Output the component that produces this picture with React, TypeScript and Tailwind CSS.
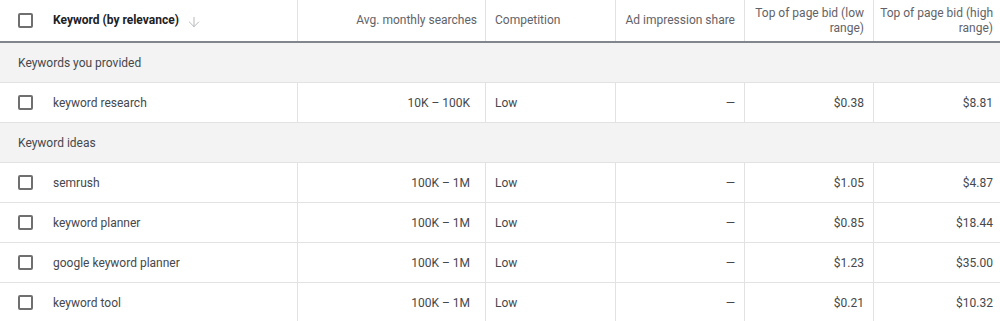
import React from 'react';
import { ArrowDown } from 'lucide-react';

type Row = {
  keyword: string;
  searches: string;
  competition: string;
  share: string;
  low: string;
  high: string;
};

const PROVIDED: Row[] = [
  { keyword: 'keyword research', searches: '10K – 100K', competition: 'Low', share: '—', low: '$0.38', high: '$8.81' },
];

const IDEAS: Row[] = [
  { keyword: 'semrush', searches: '100K – 1M', competition: 'Low', share: '—', low: '$1.05', high: '$4.87' },
  { keyword: 'keyword planner', searches: '100K – 1M', competition: 'Low', share: '—', low: '$0.85', high: '$18.44' },
  { keyword: 'google keyword planner', searches: '100K – 1M', competition: 'Low', share: '—', low: '$1.23', high: '$35.00' },
  { keyword: 'keyword tool', searches: '100K – 1M', competition: 'Low', share: '—', low: '$0.21', high: '$10.32' },
];

const GRID = 'grid grid-cols-[297px_188px_130px_129px_129px_127px]';

const Checkbox = () => (
  <div className="w-[15px] h-[15px] border-2 border-[#6f6f6f] rounded-[2px] shrink-0" />
);

const GroupRow = ({ label }: { label: string }) => (
  <div className="h-[40px] bg-[#f3f3f3] border-b border-[#e2e2e2] flex items-center pl-[18px] text-[12px] text-[#45484c]">
    {label}
  </div>
);

const DataRow = ({ row }: { row: Row }) => (
  <div className={`${GRID} h-[40px] border-b border-[#e2e2e2] text-[12px] text-[#45484c]`}>
    <div className="flex items-center pl-[18px] gap-[20px]">
      <Checkbox />
      <span>{row.keyword}</span>
    </div>
    <div className="flex items-center justify-end pr-[15px] border-l border-[#e2e2e2]">{row.searches}</div>
    <div className="flex items-center pl-[9px] border-l border-[#e2e2e2]">{row.competition}</div>
    <div className="flex items-center justify-end pr-[9px] border-l border-[#e2e2e2]">{row.share}</div>
    <div className="flex items-center justify-end pr-[9px] border-l border-[#e2e2e2]">{row.low}</div>
    <div className="flex items-center justify-end pr-[7px] border-l border-[#e2e2e2]">{row.high}</div>
  </div>
);

export default function App() {
  return (
    <div className="w-[1000px] h-[321px] overflow-hidden bg-white font-['Roboto',sans-serif]">
      <div className={`${GRID} h-[43px] border-b-2 border-[#80868b] text-[12px] text-[#5f6368] leading-[15px]`}>
        <div className="flex items-center pl-[18px] gap-[20px]">
          <Checkbox />
          <span className="font-bold text-[#202124]">Keyword (by relevance)</span>
          <ArrowDown size={16} strokeWidth={1.4} className="text-[#b0b4b8] -ml-[13px] mt-[2px]" />
        </div>
        <div className="flex items-center justify-end pr-[8px] border-l border-[#e2e2e2]">Avg. monthly searches</div>
        <div className="flex items-center pl-[9px] border-l border-[#e2e2e2]">Competition</div>
        <div className="flex items-center justify-end pr-[9px] border-l border-[#e2e2e2]">Ad impression share</div>
        <div className="flex items-center justify-end text-right pr-[9px] pl-[4px] border-l border-[#e2e2e2]">Top of page bid (low range)</div>
        <div className="flex items-center justify-end text-right pr-[7px] pl-[2px] border-l border-[#e2e2e2]">Top of page bid (high range)</div>
      </div>
      <GroupRow label="Keywords you provided" />
      {PROVIDED.map((r) => (
        <DataRow key={r.keyword} row={r} />
      ))}
      <GroupRow label="Keyword ideas" />
      {IDEAS.map((r) => (
        <DataRow key={r.keyword} row={r} />
      ))}
    </div>
  );
}
